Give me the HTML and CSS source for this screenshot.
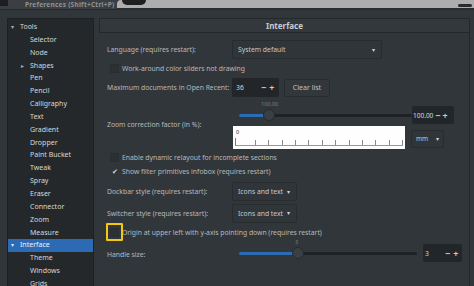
FILE: index.html
```html
<!DOCTYPE html>
<html>
<head>
<meta charset="utf-8">
<link rel="stylesheet" href="styles.css">
</head>
<body>
<div class="titlebar">
  <div class="tb-left"><span class="tb-icon"></span><span class="tb-title">Preferences (Shift+Ctrl+P)</span></div>
  <div class="tb-right"><span class="tb-blob"></span><span class="tb-dots"></span></div>
</div>
<div class="window">
  <div class="sidebar">
    <div class="item top"><span class="arrow">▾</span>Tools</div>
    <div class="item child">Selector</div>
    <div class="item child">Node</div>
    <div class="item child"><span class="arrow sub">▸</span>Shapes</div>
    <div class="item child">Pen</div>
    <div class="item child">Pencil</div>
    <div class="item child">Calligraphy</div>
    <div class="item child">Text</div>
    <div class="item child">Gradient</div>
    <div class="item child">Dropper</div>
    <div class="item child">Paint Bucket</div>
    <div class="item child">Tweak</div>
    <div class="item child">Spray</div>
    <div class="item child">Eraser</div>
    <div class="item child">Connector</div>
    <div class="item child">Zoom</div>
    <div class="item child">Measure</div>
    <div class="item top selected"><span class="arrow">▾</span>Interface</div>
    <div class="item child">Theme</div>
    <div class="item child">Windows</div>
    <div class="item child">Grids</div>
  </div>
  <div class="content">
    <div class="header">Interface</div>
    <div class="form">
      <div class="row r-lang">
        <div class="label">Language (requires restart):</div>
        <div class="combo wide"><span>System default</span><span class="caret">▾</span></div>
      </div>
      <div class="row r-check">
        <span class="check"></span><span class="clabel">Work-around color sliders not drawing</span>
      </div>
      <div class="row r-max">
        <div class="label">Maximum documents in Open Recent:</div>
        <div class="spin s36"><span class="val">36</span><span class="pm">−</span><span class="pm">+</span></div>
        <button class="btn">Clear list</button>
      </div>
      <div class="row r-zoom">
        <div class="label">Zoom correction factor (in %):</div>
        <div class="zoomctl">
          <div class="sliderrow">
            <div class="slider s1">
              <span class="sval">100.00</span>
              <div class="track"><div class="fill" style="width:30px"></div><div class="knob"></div></div>
            </div>
            <div class="spin s100"><span class="val">100.00</span><span class="pm">−</span><span class="pm">+</span></div>
          </div>
          <div class="rulerrow">
            <div class="ruler"><span class="zero">0</span>
              <div class="ticks"><i></i><i></i><i></i><i></i><i></i><i></i><i></i><i></i><i></i><i></i><i></i><i></i></div>
            </div>
            <div class="combo mm"><span>mm</span><span class="caret">▾</span></div>
          </div>
        </div>
      </div>
      <div class="row r-c2">
        <span class="check"></span><span class="clabel">Enable dynamic relayout for incomplete sections</span>
      </div>
      <div class="row r-c3">
        <span class="check checked">✔</span><span class="clabel">Show filter primitives infobox (requires restart)</span>
      </div>
      <div class="row r-dock">
        <div class="label">Dockbar style (requires restart):</div>
        <div class="combo icons"><span>Icons and text</span><span class="caret">▾</span></div>
      </div>
      <div class="row r-switch">
        <div class="label">Switcher style (requires restart):</div>
        <div class="combo icons"><span>Icons and text</span><span class="caret">▾</span></div>
      </div>
      <div class="row r-origin">
        <span class="check"></span><span class="clabel">Origin at upper left with y-axis pointing down (requires restart)</span>
        <span class="highlight"></span>
      </div>
      <div class="row r-handle">
        <div class="label">Handle size:</div>
        <div class="slider s2">
          <span class="sval v3">3</span>
          <div class="track"><div class="fill" style="width:59px"></div><div class="knob"></div></div>
        </div>
        <div class="spin s3"><span class="val">3</span><span class="pm">−</span><span class="pm">+</span></div>
      </div>
    </div>
  </div>
</div>
</body>
</html>
```
FILE: styles.css
```css
* { box-sizing: border-box; }
html, body { margin: 0; padding: 0; }
body {
  width: 474px; height: 286px; overflow: hidden;
  background: #31363b;
  font-family: "Noto Sans", "Open Sans", sans-serif;
  font-size: 6.8px;
  color: #c4c7ca;
}
.titlebar { height: 10px; display: flex; }
.tb-left {
  flex: none; width: 117px; background: #3b3f43; display: flex; align-items: flex-end;
  border-bottom: 1px solid #26292c; overflow: hidden;
}
.tb-icon { width: 8px; height: 6px; background: #1c1e20; align-self: flex-start; flex: none; }
.tb-title { margin-left: 17px; font-size: 6.5px; font-weight: bold; color: #8e9296; line-height: 9px; letter-spacing: 0.25px; white-space: nowrap; }
.tb-right { flex: 1; background: #adadad; position: relative; border-bottom: 2px solid #2a2d30; border-top-left-radius: 4px; }
.tb-blob { position: absolute; left: 5px; top: 0; width: 24px; height: 5px; background: #1e1f21; border-radius: 0 0 6px 6px; }
.tb-dots { position: absolute; right: 2px; top: 4px; width: 14px; height: 3px; background: #2a2b2d; border-radius: 2px; }

.window { display: flex; padding: 8px 4px 0 7px; height: 276px; }
.sidebar {
  width: 87px; background: #24282b; border: 1px solid #1e2124; border-bottom: none;
  padding-top: 2px; flex: none;
}
.item { height: 12.85px; line-height: 12.85px; color: #d6d8da; white-space: nowrap; position: relative; font-size: 7px; }
.item.top { padding-left: 12px; }
.item.child { padding-left: 22px; }
.arrow { position: absolute; left: 3px; font-size: 6px; color: #a9adb1; }
.arrow.sub { left: 13px; }
.item.selected { background: #2c6bb3; color: #eef3f8; }
.item.selected .arrow { color: #dfe9f5; }

.content { flex: 1; margin-left: 5px; border-right: 1px solid #24272a; }
.header {
  height: 15px; border: 1px solid #25282b; border-right: none;
  text-align: center; font-weight: bold; line-height: 13px; font-size: 8px; color: #c9ccce;
  background: #33383d;
}
.form { padding-left: 8px; padding-top: 7px; }
.row { display: flex; align-items: center; position: relative; }
.label { width: 125px; flex: none; white-space: nowrap; color: #b7babd; }
.combo {
  height: 19px; border: 1px solid #282c2f; background: #30353a; border-radius: 2px;
  display: flex; align-items: center; justify-content: space-between; padding: 0 6px 0 5px;
  color: #c6c9cc;
}
.caret { font-size: 6px; color: #cfd2d4; }
.combo.wide { width: 150px; }
.r-lang { height: 19px; }
.r-check { height: 12px; margin-top: 3px; }
.check { width: 9px; height: 9px; border: 1px solid #2a2d30; background: #2b3034; margin-left: 3px; flex: none; font-size: 7px; line-height: 7px; text-align: center; color: #d8dadc; }
.check.checked { border-color: transparent; background: transparent; }
.clabel { margin-left: 3px; white-space: nowrap; color: #b7babd; }
.r-max { height: 19px; margin-top: 4px; }
.spin { background: #232629; border-radius: 2px; display: flex; align-items: center; color: #d6d8da; flex: none; }
.spin .pm { font-size: 9px; font-weight: bold; margin-left: 3px; color: #c8cbcd; }
.spin.s36 { width: 47px; height: 19px; padding-left: 4px; }
.spin.s36 .val { width: 22px; }
.btn {
  margin-left: 5px; height: 18px; width: 46px; padding: 0; border: 1px solid #282c2f; background: #32373c;
  color: #bfc2c5; font-family: inherit; font-size: 7px; border-radius: 2px;
}
.r-zoom { margin-top: 3px; height: 49px; }
.zoomctl { display: flex; flex-direction: column; }
.sliderrow { display: flex; align-items: flex-end; height: 25px; }
.slider { position: relative; flex: none; }
.slider.s1 { width: 173px; height: 25px; margin-left: 7px; }
.sval { position: absolute; top: 0; font-size: 5.5px; color: #7a7f83; }
.s1 .sval { left: 22px; }
.track { position: absolute; left: 0; right: 0; height: 3px; background: #1f2225; border-radius: 2px; }
.s1 .track { top: 14px; }
.fill { height: 3px; background: #2c6bb3; border-radius: 2px; }
.knob { position: absolute; top: -5px; width: 12px; height: 12px; border-radius: 50%; background: #3a3f44; border: 1px solid #262a2d; }
.s1 .knob { left: 24px; }
.spin.s100 { width: 42px; height: 18px; padding-left: 1px; margin-bottom: 1px; }
.spin.s100 .val { font-size: 6.5px; }
.spin.s100 .pm { margin-left: 2px; }
.rulerrow { display: flex; align-items: center; height: 24px; }
.ruler { width: 172px; height: 23px; background: #fefefe; position: relative; margin-left: 1px; }
.zero { position: absolute; left: 3px; top: 2px; font-size: 5.5px; color: #222; }
.ticks { position: absolute; left: 2px; right: 2px; bottom: 3px; height: 8px; border-left: 1px solid #777; border-bottom: 1px solid #999; display: flex; justify-content: space-between; padding-left: 19px; }
.ticks i { width: 1px; height: 5px; background: #8a8a8a; align-self: flex-end; }
.combo.mm { width: 33px; height: 18px; margin-left: 6px; padding: 0 4px; font-size: 6.5px; margin-top: 3px; }
.r-c2 { height: 12px; margin-top: 2px; }
.r-c3 { height: 12px; margin-top: 2px; }
.r-dock { height: 19px; margin-top: 5px; }
.combo.icons { width: 65px; }
.r-switch { height: 18px; margin-top: 3px; }
.r-origin { height: 14px; margin-top: 3px; }
.highlight { position: absolute; left: -1px; top: -2px; width: 17px; height: 18px; border: 2px solid #f2c811; border-radius: 1px; }
.r-handle { height: 20px; margin-top: 3px; align-items: flex-end; }
.r-handle .label { align-self: center; padding-top: 4px; }
.slider.s2 { width: 178px; height: 20px; margin-left: 7px; }
.v3 { left: 56px; top: -4px; }
.s2 .track { top: 10px; }
.s2 .knob { left: 53px; }
.spin.s3 { width: 39px; height: 18px; margin-left: 6px; padding-left: 2px; margin-bottom: 0; }
.spin.s3 .val { width: 17px; }
```
